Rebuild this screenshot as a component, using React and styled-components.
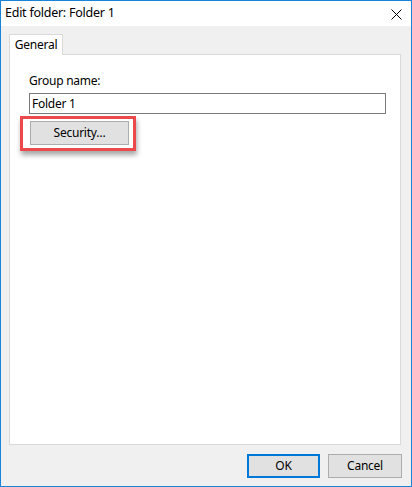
import React from 'react';
import styled, { createGlobalStyle } from 'styled-components';

const GlobalStyle = createGlobalStyle`
  html, body {
    margin: 0;
    padding: 0;
    background: #ffffff;
  }
  * {
    box-sizing: border-box;
  }
`;

const Window = styled.div`
  width: 412px;
  height: 487px;
  border: 1px solid #1883d7;
  display: flex;
  flex-direction: column;
  font-family: "Noto Sans", "Open Sans", sans-serif;
  font-size: 12px;
  letter-spacing: -0.25px;
  color: #000;
`;

const TitleBar = styled.div`
  height: 25px;
  background: #fff;
  display: flex;
  align-items: center;
  justify-content: space-between;
  padding: 0 9px 0 4px;
`;

const Title = styled.span`
  font-size: 12.5px;
  line-height: 16px;
  margin-top: -1px;
`;

const CloseButton = styled.button`
  border: none;
  background: transparent;
  padding: 0;
  width: 11px;
  height: 11px;
  display: flex;
  margin-top: 2px;
`;

const Body = styled.div`
  flex: 1;
  background: #f0f0f0;
  display: flex;
  flex-direction: column;
  padding: 8px 10px 8px 8px;
`;

const TabStrip = styled.div`
  display: flex;
  height: 20px;
  position: relative;
  z-index: 1;
`;

const Tab = styled.div`
  width: 54px;
  height: 21px;
  background: #fff;
  border: 1px solid #d9d9d9;
  border-bottom: none;
  display: flex;
  align-items: center;
  justify-content: center;
  line-height: 16px;
  padding-bottom: 1px;
`;

const Panel = styled.div`
  flex: 1;
  background: #fff;
  border: 1px solid #d9d9d9;
  padding: 18px 14px 0 19px;
  display: flex;
  flex-direction: column;
  align-items: flex-start;
`;

const Label = styled.label`
  line-height: 16px;
  margin-bottom: 4px;
`;

const TextInput = styled.input`
  width: 357px;
  height: 21px;
  border: 1px solid #7a7a7a;
  padding: 0 2px;
  font-family: inherit;
  font-size: 12px;
  letter-spacing: inherit;
  color: #000;
  outline: none;
`;

const Highlight = styled.div`
  margin: 2px 0 0 -9px;
  border: 3px solid #ec4a4a;
  padding: 2px 4px 3px 7px;
  box-shadow: 1px 4px 5px rgba(0, 0, 0, 0.35);
`;

const Button = styled.button`
  width: ${p => p.$width}px;
  height: 24px;
  background: #e1e1e1;
  border: ${p => (p.$primary ? '2px solid #0078d7' : '1px solid #adadad')};
  font-family: inherit;
  font-size: 12px;
  letter-spacing: inherit;
  color: #000;
  padding: 0;
  line-height: 16px;
`;

const Footer = styled.div`
  display: flex;
  justify-content: flex-end;
  gap: 8px;
  margin-top: 9px;
  margin-right: -1px;
`;

export default function App() {
  return (
    <>
      <GlobalStyle />
      <Window>
        <TitleBar>
          <Title>Edit folder: Folder 1</Title>
          <CloseButton aria-label="Close">
            <svg width="11" height="11" viewBox="0 0 11 11">
              <path d="M0.5 0.5 L10.5 10.5 M10.5 0.5 L0.5 10.5" stroke="#000" strokeWidth="1" fill="none" />
            </svg>
          </CloseButton>
        </TitleBar>
        <Body>
          <TabStrip>
            <Tab>General</Tab>
          </TabStrip>
          <Panel>
            <Label>Group name:</Label>
            <TextInput defaultValue="Folder 1" />
            <Highlight>
              <Button $width={99}>Security…</Button>
            </Highlight>
          </Panel>
          <Footer>
            <Button $width={73} $primary>OK</Button>
            <Button $width={74}>Cancel</Button>
          </Footer>
        </Body>
      </Window>
    </>
  );
}
